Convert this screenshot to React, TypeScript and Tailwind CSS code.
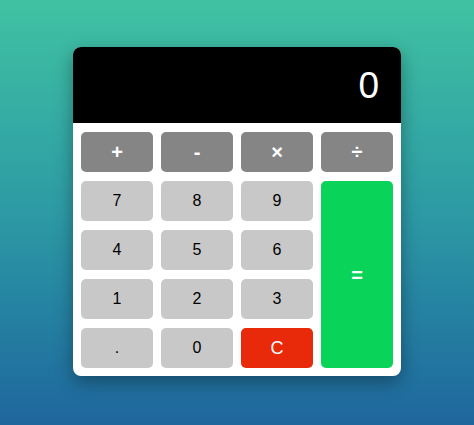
import React from "react";

export default function App() {
  const font = { fontFamily: '"Liberation Sans", Arial, sans-serif' };
  const op = "rounded-[5px] bg-[#858585] text-white font-bold text-[20px] flex items-center justify-center";
  const num = "rounded-[5px] bg-[#c8c8c8] text-black text-[16px] flex items-center justify-center";
  return (
    <div
      className="w-full h-[425px] pb-[2px] flex items-center justify-center bg-gradient-to-b from-[#40c2a2] via-[#2d9aa4] to-[#1f669d]"
      style={font}
    >
      <div className="w-[328px] rounded-[8px] bg-white overflow-hidden shadow-[0_6px_18px_rgba(0,0,0,0.35)]">
        <div className="h-[76px] bg-black flex items-center justify-end pr-[22px] text-white text-[37px] leading-none">
          0
        </div>
        <div className="px-[8px] pt-[9px] pb-[8px] grid grid-cols-4 gap-x-[8px] gap-y-[9px] auto-rows-[40px]">
          <button className={op}>+</button>
          <button className={op}>-</button>
          <button className={op}>×</button>
          <button className={op}>÷</button>
          <button className={num}>7</button>
          <button className={num}>8</button>
          <button className={num}>9</button>
          <button className="row-span-4 rounded-[5px] bg-[#0ad35a] text-white font-bold text-[20px] flex items-center justify-center">
            =
          </button>
          <button className={num}>4</button>
          <button className={num}>5</button>
          <button className={num}>6</button>
          <button className={num}>1</button>
          <button className={num}>2</button>
          <button className={num}>3</button>
          <button className={num}>.</button>
          <button className={num}>0</button>
          <button className="rounded-[5px] bg-[#e82a0a] text-white text-[18px] flex items-center justify-center">
            C
          </button>
        </div>
      </div>
    </div>
  );
}
